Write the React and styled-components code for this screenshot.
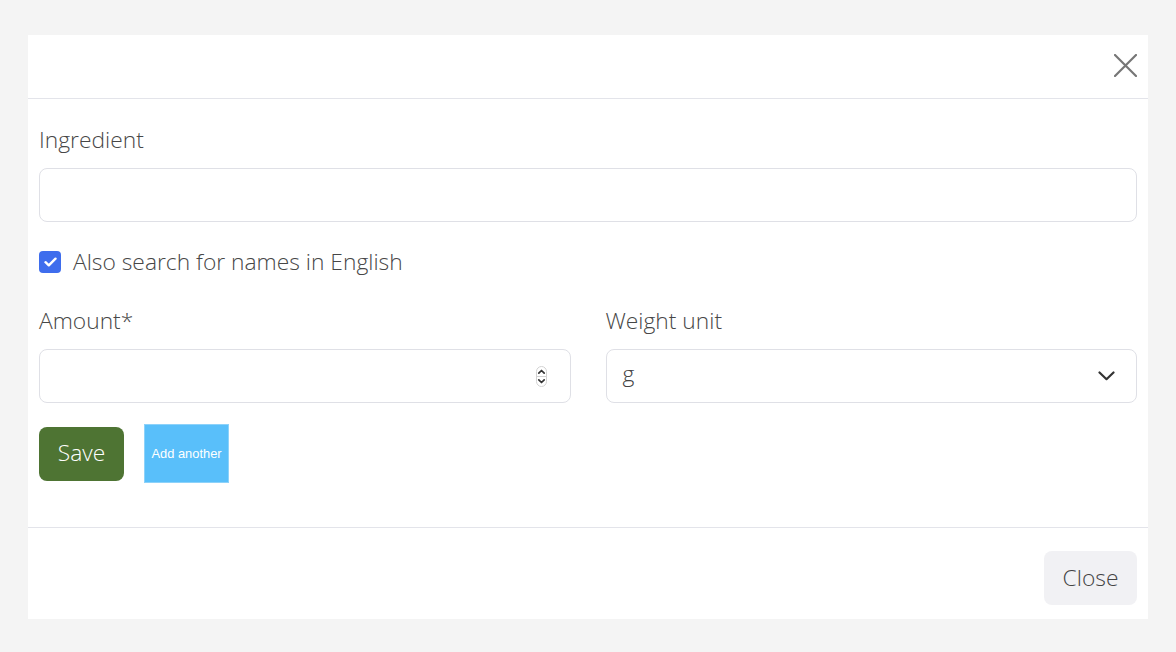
import styled, { createGlobalStyle } from 'styled-components';

const GlobalStyle = createGlobalStyle`
  html, body {
    margin: 0;
    padding: 0;
    background: #f4f4f4;
  }
  body {
    font-family: "Open Sans", "Liberation Sans", sans-serif;
    font-weight: 300;
    color: #454545;
  }
  * {
    box-sizing: border-box;
  }
`;

const Page = styled.div`
  padding: 35px 28px 33px;
`;

const Modal = styled.div`
  background: #ffffff;
  display: flex;
  flex-direction: column;
`;

const Header = styled.div`
  height: 64px;
  border-bottom: 1px solid #e3e4ea;
  display: flex;
  align-items: center;
  justify-content: flex-end;
  padding: 0 11px 2px;
`;

const CloseIcon = styled.button`
  border: none;
  background: none;
  padding: 0;
  width: 23px;
  height: 23px;
  cursor: pointer;
  display: flex;
`;

const Body = styled.div`
  padding: 24px 11px 44px;
  display: flex;
  flex-direction: column;
`;

const Label = styled.label`
  display: block;
  font-size: 22.8px;
  line-height: 33px;
  color: #474747;
  margin-bottom: ${(p) => p.$gap || 12}px;
`;

const Field = styled.div`
  height: 54px;
  border: 1px solid #dfe0e6;
  border-radius: 8px;
  display: flex;
  align-items: center;
  padding: 0 16px;
  gap: 12px;
  background: #fff;
`;

const Input = styled.input`
  flex: 1;
  min-width: 0;
  border: none;
  outline: none;
  background: transparent;
  font-family: inherit;
  font-weight: 300;
  font-size: 22.8px;
  color: #444;
  padding: 0;
`;

const Spinner = styled.span`
  display: flex;
  margin-right: 7px;
`;

const SelectValue = styled.span`
  flex: 1;
  font-size: 22.8px;
  color: #444;
  line-height: 1;
  padding-bottom: 4px;
`;

const CheckRow = styled.label`
  display: flex;
  align-items: center;
  gap: 12px;
  height: 33px;
  margin: 23px 0 26px;
  font-size: 22.8px;
  color: #474747;
`;

const Check = styled.span`
  width: 22px;
  height: 22px;
  border-radius: 4px;
  background: #3e6ded;
  display: flex;
  align-items: center;
  justify-content: center;
  flex-shrink: 0;
`;

const Columns = styled.div`
  display: grid;
  grid-template-columns: 1fr 1fr;
  column-gap: 35px;
`;

const Actions = styled.div`
  display: flex;
  align-items: center;
  gap: 20px;
  margin-top: 21px;
`;

const SaveButton = styled.button`
  height: 54px;
  width: 85px;
  border: none;
  border-radius: 8px;
  background: #4e7433;
  color: #ffffff;
  font-family: "Open Sans", sans-serif;
  font-weight: 300;
  font-size: 22.8px;
  padding: 0 0 2px;
`;

const AddButton = styled.button`
  height: 59px;
  width: 85px;
  border: 1px solid #8dd2fa;
  border-radius: 0;
  background: #59bffa;
  color: #ffffff;
  font-family: "Liberation Sans", Arial, sans-serif;
  font-size: 12.9px;
  padding: 0;
`;

const Footer = styled.div`
  border-top: 1px solid #e3e4ea;
  padding: 23px 11px 14px;
  display: flex;
  justify-content: flex-end;
`;

const CloseButton = styled.button`
  height: 54px;
  width: 93px;
  border: none;
  border-radius: 8px;
  background: #f1f1f4;
  color: #444;
  font-family: "Open Sans", sans-serif;
  font-weight: 300;
  font-size: 22.8px;
  padding: 0 0 2px;
`;

const App = () => (
  <>
    <GlobalStyle />
    <Page>
      <Modal>
        <Header>
          <CloseIcon aria-label="Close">
            <svg width="23" height="23" viewBox="0 0 23 23">
              <path d="M1 1L22 22M22 1L1 22" stroke="#767676" strokeWidth="2.2" strokeLinecap="round" />
            </svg>
          </CloseIcon>
        </Header>
        <Body>
          <Label $gap={12}>Ingredient</Label>
          <Field>
            <Input type="text" />
          </Field>
          <CheckRow>
            <Check>
              <svg width="13" height="10" viewBox="0 0 13 10">
                <path d="M1.5 5.2L4.8 8.3L11.5 1.7" fill="none" stroke="#fff" strokeWidth="2.4" strokeLinecap="round" strokeLinejoin="round" />
              </svg>
            </Check>
            Also search for names in English
          </CheckRow>
          <Columns>
            <div>
              <Label $gap={12}>Amount*</Label>
              <Field>
                <Input type="text" />
                <Spinner>
                  <svg width="11" height="21" viewBox="0 0 11 21">
                    <rect x="0.5" y="0.5" width="10" height="20" rx="5" fill="#fff" stroke="#d2d2d2" />
                    <line x1="0.5" y1="10.5" x2="10.5" y2="10.5" stroke="#d2d2d2" />
                    <path d="M2.8 7.2L5.5 4.5L8.2 7.2" fill="none" stroke="#333" strokeWidth="1.7" strokeLinecap="round" strokeLinejoin="round" />
                    <path d="M2.8 13.8L5.5 16.5L8.2 13.8" fill="none" stroke="#333" strokeWidth="1.7" strokeLinecap="round" strokeLinejoin="round" />
                  </svg>
                </Spinner>
              </Field>
            </div>
            <div>
              <Label $gap={12}>Weight unit</Label>
              <Field>
                <SelectValue>g</SelectValue>
                <svg width="17" height="10" viewBox="0 0 17 10" style={{ marginRight: 5 }}>
                  <path d="M1.5 1.5L8.5 8.2L15.5 1.5" fill="none" stroke="#333" strokeWidth="2.2" strokeLinecap="round" strokeLinejoin="round" />
                </svg>
              </Field>
            </div>
          </Columns>
          <Actions>
            <SaveButton>Save</SaveButton>
            <AddButton>Add another</AddButton>
          </Actions>
        </Body>
        <Footer>
          <CloseButton>Close</CloseButton>
        </Footer>
      </Modal>
    </Page>
  </>
);

export default App;
